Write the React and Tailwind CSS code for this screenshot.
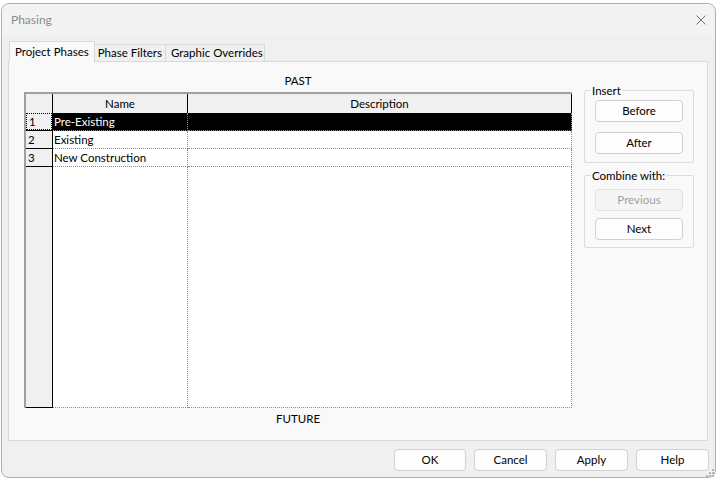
const rows = [
  { n: 1, name: 'Pre-Existing' },
  { n: 2, name: 'Existing' },
  { n: 3, name: 'New Construction' },
];

const font = "font-['Lato','Liberation_Sans',sans-serif]";

/** Plain Windows-style push button */
const WinButton = ({ children, disabled, className = '' }) => (
  <button
    disabled={disabled}
    className={`h-[22px] rounded-[4px] border text-[11.5px] leading-none ${
      disabled
        ? 'border-[#e2e2e2] bg-[#f5f5f5] text-[#a0a0a0]'
        : 'border-[#d0d0d0] bg-[#fdfdfd] text-black'
    } ${className}`}
  >
    {children}
  </button>
);

const GroupBox = ({ label, children, className = '' }) => (
  <fieldset className={`w-[110px] rounded-[2px] border border-[#dcdcdc] ${className}`}>
    <legend className="ml-[6px] px-[1px] text-[11.5px] leading-[15px] text-black">{label}</legend>
    {children}
  </fieldset>
);

const PhaseGrid = () => (
  <div className="flex h-[316px] w-[548px] flex-col border-l-2 border-t-2 border-[#a0a0a0] bg-white text-[11.5px]">
    {/* header */}
    <div className="flex h-[19px] shrink-0 bg-[#f0f0f0]">
      <div className="w-[27px] border-r border-black" />
      <div className="flex w-[135px] items-center justify-center border-r border-black">Name</div>
      <div className="flex flex-1 items-center justify-center border-r border-black">Description</div>
    </div>

    {rows.map((r) => {
      const sel = r.n === 1;
      return (
        <div key={r.n} className="flex h-[18px] shrink-0">
          <div className="flex w-[27px] border-b border-r border-black bg-[#f0f0f0]">
            <span
              className={`flex flex-1 items-center pl-[2px] ${sel ? 'border border-dotted border-black' : ''}`}
            >
              {r.n}
            </span>
          </div>
          <div
            className={`flex w-[135px] items-center border-b border-r border-dotted border-[#8a8a8a] pl-[1px] ${
              sel ? 'bg-black text-white' : ''
            }`}
          >
            {r.name}
          </div>
          <div
            className={`flex-1 border-b border-r border-dotted border-[#8a8a8a] ${sel ? 'bg-black' : ''}`}
          />
        </div>
      );
    })}

    {/* empty area */}
    <div className="flex flex-1">
      <div className="w-[27px] border-b border-r border-black bg-[#f0f0f0]" />
      <div className="w-[135px] border-b border-r border-dotted border-[#8a8a8a]" />
      <div className="flex-1 border-b border-r border-dotted border-[#8a8a8a]" />
    </div>
  </div>
);

export default function App() {
  return (
    <div className={`h-[480px] w-[716px] overflow-hidden bg-white pl-px pt-[3px] text-black ${font}`}>
      <div className="flex h-[475px] w-[715px] flex-col rounded-lg border border-[#b0b0b0] bg-[#f0f0f0]">
        {/* title bar */}
        <div className="flex h-[31px] shrink-0 items-center justify-between rounded-t-lg bg-[#f3f3f3] pl-[9px] pr-[9px]">
          <span className="text-[12px] text-[#8a8a8a]">Phasing</span>
          <svg width="10" height="10" viewBox="0 0 10 10" className="text-[#707070]">
            <path d="M0.5 0.5 9.5 9.5M9.5 0.5 0.5 9.5" stroke="currentColor" strokeWidth="1" fill="none" />
          </svg>
        </div>

        {/* tabs */}
        <div className="relative z-10 -mb-px ml-[7px] mt-[6px] flex items-end text-[11.5px]">
          <div className="flex h-[21px] items-center border-x border-t border-[#d9d9d9] bg-[#f9f9f9] px-[5px]">
            Project Phases
          </div>
          <div className="flex h-[18px] items-center border border-l-0 border-[#d9d9d9] bg-[#f0f0f0] px-[3px]">
            Phase Filters
          </div>
          <div className="flex h-[18px] items-center border border-l-0 border-[#d9d9d9] bg-[#f0f0f0] pl-[5px] pr-[1px]">
            Graphic Overrides
          </div>
        </div>

        {/* tab panel */}
        <div className="ml-[6px] flex h-[380px] w-[700px] border border-[#d9d9d9] bg-[#f9f9f9] pl-[15px]">
          <div className="flex flex-col pt-[11px] text-[11.5px]">
            <div className="mb-[3px] h-[16px] text-center leading-[16px]">PAST</div>
            <PhaseGrid />
            <div className="mt-[3px] h-[16px] text-center leading-[16px]">FUTURE</div>
          </div>

          <div className="ml-[12px] flex flex-col pt-[21px]">
            <GroupBox label="Insert" className="h-[80px]">
              <div className="flex flex-col gap-[10px] px-[10px] pt-[2px]">
                <WinButton className="w-[88px]">Before</WinButton>
                <WinButton className="w-[88px]">After</WinButton>
              </div>
            </GroupBox>
            <GroupBox label="Combine with:" className="mt-[5px] h-[80px]">
              <div className="flex flex-col gap-[7px] px-[10px] pt-[6px]">
                <WinButton disabled className="w-[88px]">Previous</WinButton>
                <WinButton className="w-[88px]">Next</WinButton>
              </div>
            </GroupBox>
          </div>
        </div>

        {/* footer buttons */}
        <div className="relative mt-[8px] flex justify-end gap-[8px] pr-[6px]">
          <WinButton className="w-[72px]">OK</WinButton>
          <WinButton className="w-[73px]">Cancel</WinButton>
          <WinButton className="w-[73px]">Apply</WinButton>
          <WinButton className="w-[73px]">Help</WinButton>
          <svg width="8" height="8" viewBox="0 0 8 8" className="absolute -bottom-[6px] right-[1px] text-[#b4b4b4]">
            <rect x="6" y="0" width="2" height="2" fill="currentColor" />
            <rect x="3" y="3" width="2" height="2" fill="currentColor" />
            <rect x="6" y="3" width="2" height="2" fill="currentColor" />
            <rect x="0" y="6" width="2" height="2" fill="currentColor" />
            <rect x="3" y="6" width="2" height="2" fill="currentColor" />
            <rect x="6" y="6" width="2" height="2" fill="currentColor" />
          </svg>
        </div>
      </div>
    </div>
  );
}
